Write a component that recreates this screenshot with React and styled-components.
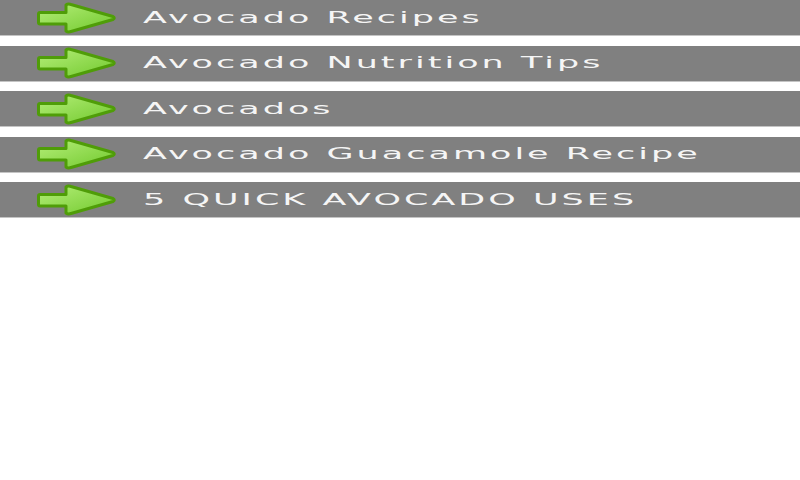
import React from 'react';
import styled, { createGlobalStyle } from 'styled-components';

const GlobalStyle = createGlobalStyle`
  * {
    box-sizing: border-box;
    margin: 0;
    padding: 0;
  }

  html, body, #root {
    width: 100%;
    height: 100%;
    overflow: hidden;
    background: #ffffff;
  }

  body {
    font-family: 'DejaVu Sans', 'Liberation Sans', sans-serif;
  }
`;

const List = styled.div`
  display: flex;
  flex-direction: column;
  gap: 9.5px;
  width: 100%;
`;

const Row = styled.div`
  height: 36px;
  background: #808080;
  border-bottom: 1px solid #c4c4c4;
  display: flex;
  align-items: center;
`;

const ArrowBox = styled.div`
  width: 143px;
  padding-left: 37px;
  display: flex;
  align-items: center;
  flex-shrink: 0;
`;

// the source font is a wide geometric face; stretch a normal one to fit
const Label = styled.span`
  display: inline-block;
  color: #f5f5f5;
  font-size: 15px;
  letter-spacing: 1.3px;
  white-space: nowrap;
  transform: scaleX(2.33);
  transform-origin: left center;
`;

const Arrow = () => (
  <svg width="80" height="32" viewBox="0 0 80 32">
    <defs>
      <linearGradient id="arrowFill" x1="0" y1="0" x2="1" y2="1">
        <stop offset="0%" stopColor="#b4ee78" />
        <stop offset="100%" stopColor="#72c92e" />
      </linearGradient>
    </defs>
    <path
      d="M3 10.5 H29 V3 Q31 1.5 34 2.5 L76 14.5 Q78.5 16 76 17.5 L34 29.5 Q31 30.5 29 29 V22 H3 Q1.5 22 1.5 20.5 V12 Q1.5 10.5 3 10.5 Z"
      fill="url(#arrowFill)"
      stroke="#4f9d08"
      strokeWidth="3"
      strokeLinejoin="round"
    />
  </svg>
);

const items = [
  'Avocado Recipes',
  'Avocado Nutrition Tips',
  'Avocados',
  'Avocado Guacamole Recipe',
  '5 QUICK AVOCADO USES',
];

const App = () => (
  <>
    <GlobalStyle />
    <List>
      {items.map((text) => (
        <Row key={text}>
          <ArrowBox>
            <Arrow />
          </ArrowBox>
          <Label>{text}</Label>
        </Row>
      ))}
    </List>
  </>
);

export default App;
